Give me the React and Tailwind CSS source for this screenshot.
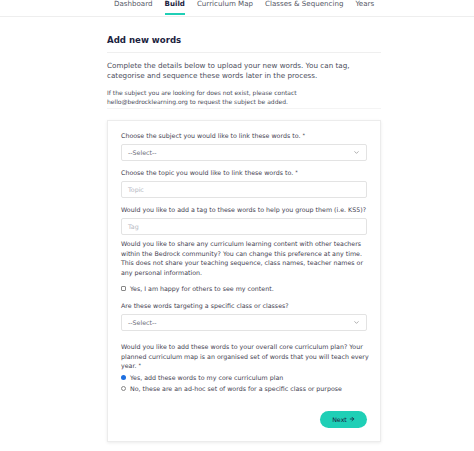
import { ChevronDown, ArrowRight } from "lucide-react";

export default function App() {
  const tabs = ["Dashboard", "Build", "Curriculum Map", "Classes & Sequencing", "Years"];

  return (
    <div className="w-full min-h-[451px] bg-white text-[#3f4150]" style={{ fontFamily: '"DejaVu Sans", sans-serif' }}>
      {/* top tabs */}
      <div className="h-[17px] border-b border-[#eeeeee] overflow-hidden">
        <div className="flex gap-[12px] pl-[114px] -mt-[1px]">
          {tabs.map((t) => (
            <div key={t} className="flex flex-col items-center">
              <span
                className={`text-[7.1px] leading-[10px] whitespace-nowrap ${
                  t === "Build" ? "font-bold text-[#1c2340]" : "text-[#555866]"
                }`}
              >
                {t}
              </span>
              {t === "Build" && <div className="mt-[4px] h-[2px] w-full bg-[#1fcfb6]"></div>}
            </div>
          ))}
        </div>
      </div>

      <div className="ml-[107px] w-[274px]">
        <h1 className="mt-[17px] pb-[6px] text-[8.6px] leading-[12px] font-bold text-[#1c2340] border-b border-[#efefef]">
          Add new words
        </h1>
        <p className="mt-[8px] text-[7.2px] leading-[10px] text-[#4a4c5a]">
          Complete the details below to upload your new words. You can tag,<br />categorise and sequence these words later in the process.
        </p>
        <p className="mt-[7px] pb-[2px] text-[6px] leading-[9px] text-[#4a4c5a] border-b border-[#f4f4f4]">
          If the subject you are looking for does not exist, please contact<br />hello@bedrocklearning.org to request the subject be added.
        </p>

        {/* form card */}
        <div className="mt-[11px] border border-[#ececec] shadow-[0_1px_3px_rgba(0,0,0,0.08)] px-[13px] pt-[11px] pb-[13px] text-[6.3px] text-[#3f4150]">
          <label className="block leading-[8px]">
            Choose the subject you would like to link these words to. <span className="relative -top-[1px] text-[5px]">*</span>
          </label>
          <div className="mt-[4px] h-[17px] border border-[#e3e3e3] rounded-[2px] flex items-center justify-between px-[6px] text-[#6b6d78]">
            <span>--Select--</span>
            <ChevronDown size={7} strokeWidth={2} className="text-[#777]" />
          </div>

          <label className="block mt-[8px] leading-[8px]">
            Choose the topic you would like to link these words to. <span className="relative -top-[1px] text-[5px]">*</span>
          </label>
          <div className="mt-[4px] h-[17px] border border-[#e3e3e3] rounded-[2px] flex items-center px-[6px] text-[#b5b7bf]">
            Topic
          </div>

          <label className="block mt-[8px] leading-[8px]">
            Would you like to add a tag to these words to help you group them (i.e. KS5)?
          </label>
          <div className="mt-[4px] h-[17px] border border-[#e3e3e3] rounded-[2px] flex items-center px-[6px] text-[#b5b7bf]">
            Tag
          </div>

          <p className="mt-[4px] leading-[9.7px] whitespace-nowrap">
            Would you like to share any curriculum learning content with other teachers<br />
            within the Bedrock community? You can change this preference at any time.<br />
            This does not share your teaching sequence, class names, teacher names or<br />
            any personal information.
          </p>
          <div className="mt-[7px] flex items-center gap-[4px] leading-[8px]">
            <span className="w-[5px] h-[5px] border border-[#888] rounded-[1px]"></span>
            <span>Yes, I am happy for others to see my content.</span>
          </div>

          <label className="block mt-[9px] leading-[8px]">Are these words targeting a specific class or classes?</label>
          <div className="mt-[4px] h-[17px] border border-[#e3e3e3] rounded-[2px] flex items-center justify-between px-[6px] text-[#6b6d78]">
            <span>--Select--</span>
            <ChevronDown size={7} strokeWidth={2} className="text-[#777]" />
          </div>

          <p className="mt-[11px] leading-[9.7px] whitespace-nowrap">
            Would you like to add these words to your overall core curriculum plan? Your<br />
            planned curriculum map is an organised set of words that you will teach every<br />
            year. <span className="relative -top-[1px] text-[5px]">*</span>
          </p>
          <div className="flex items-center gap-[4px] leading-[11px]">
            <span className="w-[5px] h-[5px] rounded-full bg-[#1e6fe0]"></span>
            <span>Yes, add these words to my core curriculum plan</span>
          </div>
          <div className="flex items-center gap-[4px] leading-[11px]">
            <span className="w-[5px] h-[5px] rounded-full border border-[#888]"></span>
            <span>No, these are an ad-hoc set of words for a specific class or purpose</span>
          </div>

          <div className="mt-[17px] flex justify-end">
            <button className="h-[17px] w-[47px] rounded-full bg-[#1fcfb6] flex items-center justify-center gap-[2px] text-[6.3px] text-[#1c2340]">
              Next <ArrowRight size={6} strokeWidth={3} />
            </button>
          </div>
        </div>
      </div>
    </div>
  );
}
